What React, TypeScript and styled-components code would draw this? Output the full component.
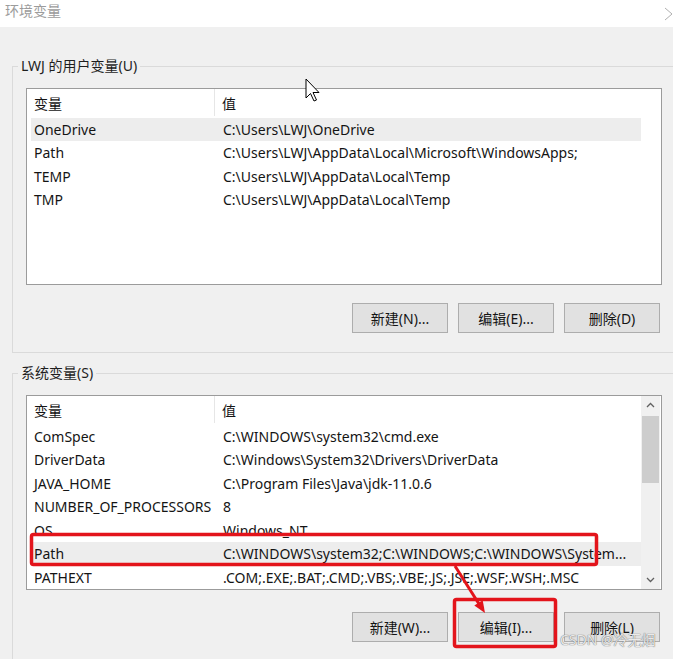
import React from "react";
import styled, { createGlobalStyle } from "styled-components";

type Variable = { name: string; value: string; selected?: boolean };

const userVars: Variable[] = [
	{ name: "OneDrive", value: "C:\\Users\\LWJ\\OneDrive", selected: true },
	{ name: "Path", value: "C:\\Users\\LWJ\\AppData\\Local\\Microsoft\\WindowsApps;" },
	{ name: "TEMP", value: "C:\\Users\\LWJ\\AppData\\Local\\Temp" },
	{ name: "TMP", value: "C:\\Users\\LWJ\\AppData\\Local\\Temp" },
];

const systemVars: Variable[] = [
	{ name: "ComSpec", value: "C:\\WINDOWS\\system32\\cmd.exe" },
	{ name: "DriverData", value: "C:\\Windows\\System32\\Drivers\\DriverData" },
	{ name: "JAVA_HOME", value: "C:\\Program Files\\Java\\jdk-11.0.6" },
	{ name: "NUMBER_OF_PROCESSORS", value: "8" },
	{ name: "OS", value: "Windows_NT" },
	{ name: "Path", value: "C:\\WINDOWS\\system32;C:\\WINDOWS;C:\\WINDOWS\\System...", selected: true },
	{ name: "PATHEXT", value: ".COM;.EXE;.BAT;.CMD;.VBS;.VBE;.JS;.JSE;.WSF;.WSH;.MSC" },
];

function VarList({ vars, height, scroll }: { vars: Variable[]; height: number; scroll?: boolean }) {
	return (
		<List $height={height}>
			<Table>
				<HeaderRow>
					<HeaderCell $divider>变量</HeaderCell>
					<HeaderCell>值</HeaderCell>
				</HeaderRow>
				{vars.map((v) => (
					<Row key={v.name} $selected={v.selected}>
						<NameCell>{v.name}</NameCell>
						<ValueCell>{v.value}</ValueCell>
					</Row>
				))}
			</Table>
			<ScrollTrack $visible={scroll}>
				{scroll && (
					<>
						<ArrowButton>
							<svg width="9" height="6" viewBox="0 0 9 6">
								<path d="M1 5 L4.5 1.5 L8 5" fill="none" stroke="#606060" strokeWidth="1.3" />
							</svg>
						</ArrowButton>
						<Thumb />
						<Spacer />
						<ArrowButton>
							<svg width="9" height="6" viewBox="0 0 9 6">
								<path d="M1 1 L4.5 4.5 L8 1" fill="none" stroke="#606060" strokeWidth="1.3" />
							</svg>
						</ArrowButton>
					</>
				)}
			</ScrollTrack>
		</List>
	);
}

export default function App() {
	return (
		<>
			<GlobalStyle />
			<Window>
				<TitleBar>
					<Title>环境变量</Title>
					<svg width="10" height="14" viewBox="0 0 10 14" style={{ marginTop: 5 }}>
						<path d="M2 1 L9 7 M2 13 L9 7" stroke="#b0b0b0" strokeWidth="1" fill="none" />
					</svg>
				</TitleBar>
				<Main>
					<Group>
						<Legend>LWJ 的用户变量(U)</Legend>
						<VarList vars={userVars} height={197} />
						<ButtonRow $top={18}>
							<Button>新建(N)...</Button>
							<Button>编辑(E)...</Button>
							<Button>删除(D)</Button>
						</ButtonRow>
					</Group>
					<Group>
						<Legend>系统变量(S)</Legend>
						<VarList vars={systemVars} height={195} scroll />
						<ButtonRow $top={22}>
							<Button>新建(W)...</Button>
							<Button>编辑(I)...</Button>
							<Button>删除(L)</Button>
						</ButtonRow>
					</Group>
				</Main>

				<Annotations width="673" height="659" viewBox="0 0 673 659">
					<rect x="31.5" y="534.5" width="565" height="30" rx="2" fill="none" stroke="#e3141b" strokeWidth="3.5" />
					<rect x="454.5" y="599.5" width="101" height="47" rx="2" fill="none" stroke="#e3141b" strokeWidth="3.5" />
					<line x1="455" y1="566" x2="479" y2="604" stroke="#e3141b" strokeWidth="3" />
					<polygon points="485,613 474.3,605.6 482.7,600.2" fill="#e3141b" />
					<path
						d="M306 79 L306 98 L310.5 93.5 L314 101 L316.5 100 L313 92.5 L319 92.5 Z"
						fill="#fff"
						stroke="#000"
						strokeWidth="1"
						strokeLinejoin="round"
					/>
				</Annotations>
				<Watermark>CSDN @冷无烟</Watermark>
			</Window>
		</>
	);
}

const GlobalStyle = createGlobalStyle`
    body {
        margin: 0;
        background: #f0f0f0;
        font-family: "Noto Sans", "Noto Sans CJK SC", sans-serif;
    }
`;

const Window = styled.div`
    position: relative;
    width: 673px;
    height: 659px;
    overflow: hidden;
    background: #f0f0f0;
    color: #141414;
    font-size: 14px;
`;

const TitleBar = styled.div`
    height: 27px;
    box-sizing: border-box;
    padding: 2px 0 0 5px;
    background: #fff;
    display: flex;
    justify-content: space-between;
    align-items: flex-start;
`;

const Title = styled.div`
    font-size: 14px;
    line-height: 17px;
    color: #9c9c9c;
`;

const Main = styled.div`
    padding: 30px 0 0 12px;
`;

const Group = styled.fieldset`
    margin: 0;
    padding: 13px 0 19px 13px;
    border: 1px solid #dadada;
    width: 680px;
    min-width: 0;
    box-sizing: border-box;

    & + & {
        margin-top: 11px;
    }
`;

const Legend = styled.legend`
    margin-left: -8px;
    padding: 0 3px;
    font-size: 14px;
    line-height: 18px;
    color: #1e1e1e;
`;

const List = styled.div<{ $height: number }>`
    width: 636px;
    height: ${(p) => p.$height}px;
    box-sizing: border-box;
    border: 1px solid #9b9b9b;
    background: #fff;
    display: flex;
    padding: 0 1px 0 4px;
`;

const Table = styled.div`
    flex: 1;
    display: flex;
    flex-direction: column;
    min-width: 0;
`;

const HeaderRow = styled.div`
    height: 28.5px;
    box-sizing: border-box;
    padding-bottom: 1.5px;
    display: grid;
    grid-template-columns: 184px 1fr;
`;

const HeaderCell = styled.div<{ $divider?: boolean }>`
    display: flex;
    align-items: center;
    padding-left: ${(p) => (p.$divider ? 3 : 7)}px;
    border-right: ${(p) => (p.$divider ? "1px solid #e6e6e6" : "none")};
`;

const Row = styled.div<{ $selected?: boolean }>`
    height: 23.5px;
    display: grid;
    grid-template-columns: 184px 1fr;
    align-items: center;
    background: ${(p) => (p.$selected ? "#ededed" : "transparent")};
`;

const NameCell = styled.div`
    padding-left: 3px;
    white-space: nowrap;
`;

const ValueCell = styled.div`
    padding-left: 8px;
    white-space: nowrap;
    overflow: hidden;
`;

const ScrollTrack = styled.div<{ $visible?: boolean }>`
    width: 19px;
    display: flex;
    flex-direction: column;
    background: ${(p) => (p.$visible ? "#f0f0f0" : "#fff")};
`;

const ArrowButton = styled.div`
    height: 18px;
    display: flex;
    align-items: center;
    justify-content: center;
`;

const Thumb = styled.div`
    margin: 2px 1px 0;
    height: 67px;
    background: #cdcdcd;
`;

const Spacer = styled.div`
    flex: 1;
`;

const ButtonRow = styled.div<{ $top: number }>`
    width: 636px;
    margin-top: ${(p) => p.$top}px;
    padding-right: 2px;
    box-sizing: border-box;
    display: flex;
    justify-content: flex-end;
    gap: 10px;
`;

const Button = styled.button`
    width: 96px;
    height: 30px;
    background: #e1e1e1;
    border: 1px solid #adadad;
    font-family: "Noto Sans", "Noto Sans CJK SC", sans-serif;
    font-size: 14px;
    color: #141414;
    padding: 0;
`;

const Annotations = styled.svg`
    position: absolute;
    left: 0;
    top: 0;
    pointer-events: none;
`;

const Watermark = styled.div`
    position: absolute;
    left: 560px;
    top: 631px;
    font-size: 14px;
    line-height: 18px;
    color: rgba(255, 255, 255, 0.85);
    text-shadow: 0 0 1px #777, 0 0 1px #777;
    pointer-events: none;
`;
